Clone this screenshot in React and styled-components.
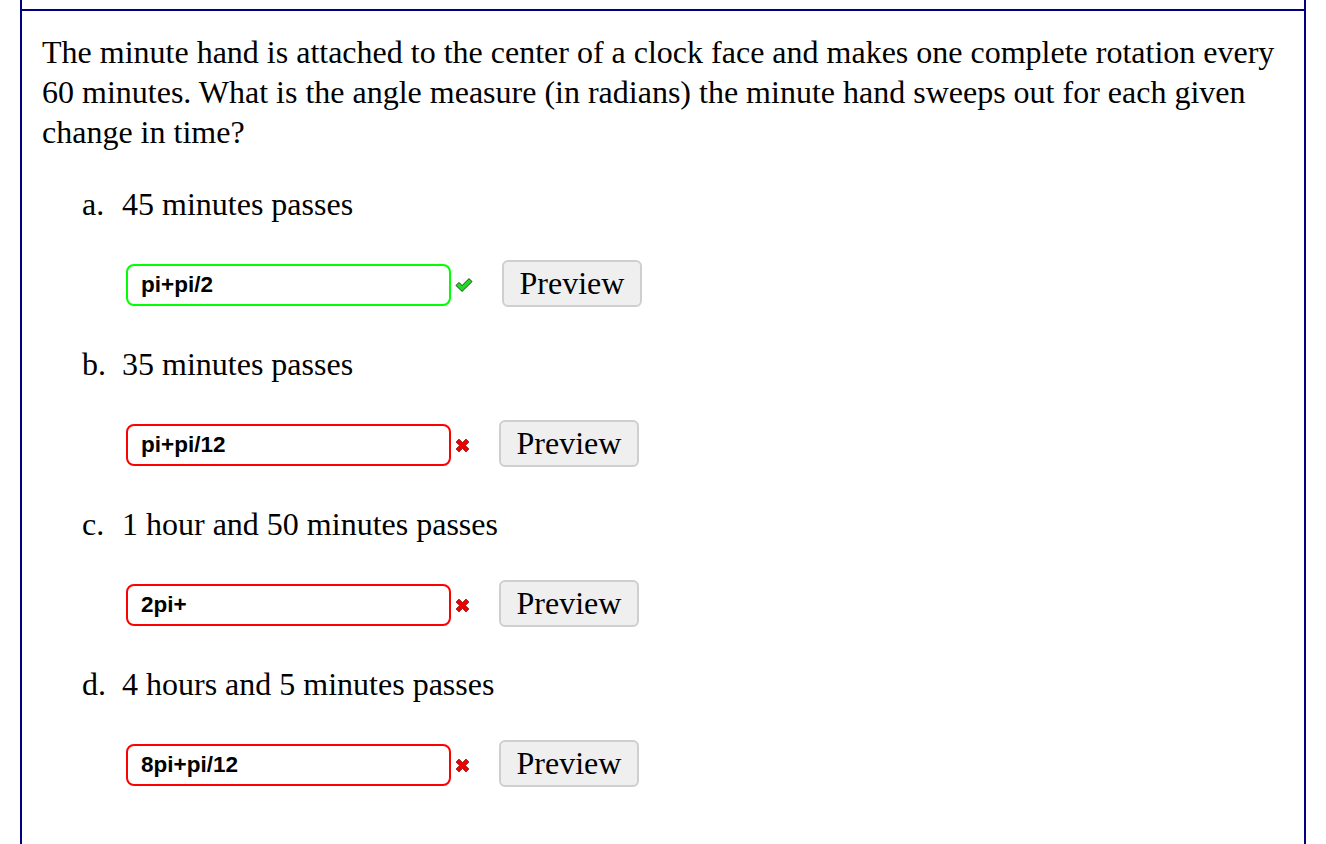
import React from 'react';
import styled, { createGlobalStyle } from 'styled-components';

const GlobalStyle = createGlobalStyle`
  html, body {
    margin: 0;
    padding: 0;
    background: #fff;
  }
  body {
    font-family: "Liberation Serif", "Times New Roman", serif;
    color: #000;
  }
`;

const Frame = styled.div`
  margin-left: 20px;
  width: 1286px;
  min-height: 844px;
  box-sizing: border-box;
  border-left: 2px solid #000080;
  border-right: 2px solid #000080;
  padding-top: 9px;
`;

const Cell = styled.div`
  border-top: 2px solid #000080;
  padding: 21px 20px 0 20px;
`;

const Question = styled.p`
  margin: 0;
  font-size: 32px;
  line-height: 40px;
`;

const Parts = styled.div`
  margin: 32px 0 0 40px;
  font-size: 32px;
  line-height: 40px;
`;

const Part = styled.div`
  margin-bottom: 37px;
`;

const PartLabel = styled.div`
  display: flex;
`;

const Letter = styled.span`
  width: 40px;
  flex-shrink: 0;
`;

const AnswerRow = styled.div`
  display: flex;
  align-items: center;
  margin-top: 36px;
  margin-left: 44px;
  height: 47px;
`;

const AnswerInput = styled.input`
  width: 325px;
  height: 42px;
  box-sizing: border-box;
  border: 2px solid ${(p) => (p.$correct ? '#00ff00' : '#ff0000')};
  border-radius: 8px;
  padding: 0 13px;
  font-family: "Liberation Sans", Arial, sans-serif;
  font-weight: bold;
  font-size: 22.5px;
  color: #000;
  outline: none;
  margin-top: 3px;
`;

const Mark = styled.span`
  display: inline-flex;
  width: 18px;
  margin-left: 4px;
  margin-top: 3px;
`;

const PreviewButton = styled.button`
  margin-left: ${(p) => (p.$correct ? '29px' : '26px')};
  width: 140px;
  height: 47px;
  box-sizing: border-box;
  background: #efefef;
  border: 2px solid #cfcfcf;
  border-radius: 6px;
  font-family: "Liberation Serif", "Times New Roman", serif;
  font-size: 32px;
  color: #000;
  padding: 0;
  margin-bottom: 1px;
`;

const CheckIcon = () => (
  <svg width="19" height="16" viewBox="0 0 19 16">
    <path
      d="M1 8.5 L4.2 5.3 L7.5 8.6 L14.8 1.2 L18 4.4 L7.5 14.8 Z"
      fill="#1fdc1f"
      stroke="#1c3d1c"
      strokeWidth="1"
      strokeLinejoin="round"
    />
  </svg>
);

const CrossIcon = () => (
  <svg width="15" height="15" viewBox="0 0 15 15">
    <path
      d="M1 4 L4 1 L7.5 4.5 L11 1 L14 4 L10.5 7.5 L14 11 L11 14 L7.5 10.5 L4 14 L1 11 L4.5 7.5 Z"
      fill="#ee0000"
      stroke="#801010"
      strokeWidth="0.7"
      strokeLinejoin="round"
    />
  </svg>
);

const parts = [
  { letter: 'a.', label: '45 minutes passes', answer: 'pi+pi/2', correct: true },
  { letter: 'b.', label: '35 minutes passes', answer: 'pi+pi/12', correct: false },
  { letter: 'c.', label: '1 hour and 50 minutes passes', answer: '2pi+', correct: false },
  { letter: 'd.', label: '4 hours and 5 minutes passes', answer: '8pi+pi/12', correct: false },
];

const App = () => (
  <>
    <GlobalStyle />
    <Frame>
      <Cell>
        <Question>
          The minute hand is attached to the center of a clock face and makes one complete
          rotation every 60 minutes. What is the angle measure (in radians) the minute hand
          sweeps out for each given change in time?
        </Question>
        <Parts>
          {parts.map((p) => (
            <Part key={p.letter}>
              <PartLabel>
                <Letter>{p.letter}</Letter>
                <span>{p.label}</span>
              </PartLabel>
              <AnswerRow>
                <AnswerInput $correct={p.correct} defaultValue={p.answer} />
                <Mark>{p.correct ? <CheckIcon /> : <CrossIcon />}</Mark>
                <PreviewButton $correct={p.correct}>Preview</PreviewButton>
              </AnswerRow>
            </Part>
          ))}
        </Parts>
      </Cell>
    </Frame>
  </>
);

export default App;
